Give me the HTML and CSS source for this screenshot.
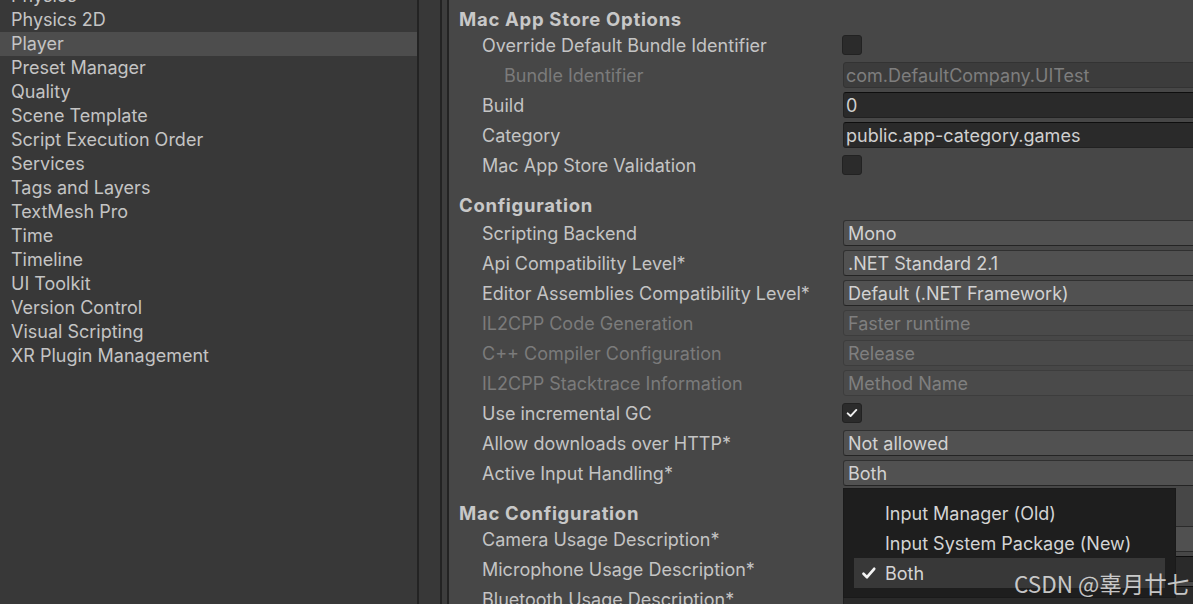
FILE: index.html
```html
<!DOCTYPE html>
<html>
<head>
<meta charset="utf-8">
<link rel="stylesheet" href="styles.css">
</head>
<body>
<div class="app">
  <nav class="sidebar">
    <div class="nav-list">
      <div class="nav-item">Physics</div>
      <div class="nav-item">Physics 2D</div>
      <div class="nav-item active">Player</div>
      <div class="nav-item">Preset Manager</div>
      <div class="nav-item">Quality</div>
      <div class="nav-item">Scene Template</div>
      <div class="nav-item">Script Execution Order</div>
      <div class="nav-item">Services</div>
      <div class="nav-item">Tags and Layers</div>
      <div class="nav-item">TextMesh Pro</div>
      <div class="nav-item">Time</div>
      <div class="nav-item">Timeline</div>
      <div class="nav-item">UI Toolkit</div>
      <div class="nav-item">Version Control</div>
      <div class="nav-item">Visual Scripting</div>
      <div class="nav-item">XR Plugin Management</div>
    </div>
  </nav>
  <div class="split"><div class="split-a"></div><div class="split-b"></div></div>
  <main class="main">
    <h2 class="heading first">Mac App Store Options</h2>
    <div class="row"><div class="label">Override Default Bundle Identifier</div><div class="field"><span class="checkbox"></span></div></div>
    <div class="row"><div class="label sub dim">Bundle Identifier</div><div class="field"><span class="text disabled">com.DefaultCompany.UITest</span></div></div>
    <div class="row"><div class="label">Build</div><div class="field"><span class="text">0</span></div></div>
    <div class="row"><div class="label">Category</div><div class="field"><span class="text">public.app-category.games</span></div></div>
    <div class="row"><div class="label">Mac App Store Validation</div><div class="field"><span class="checkbox"></span></div></div>

    <h2 class="heading second">Configuration</h2>
    <div class="row"><div class="label">Scripting Backend</div><div class="field"><span class="drop">Mono</span></div></div>
    <div class="row"><div class="label">Api Compatibility Level*</div><div class="field"><span class="drop">.NET Standard 2.1</span></div></div>
    <div class="row"><div class="label">Editor Assemblies Compatibility Level*</div><div class="field"><span class="drop">Default (.NET Framework)</span></div></div>
    <div class="row"><div class="label dim">IL2CPP Code Generation</div><div class="field"><span class="drop disabled">Faster runtime</span></div></div>
    <div class="row"><div class="label dim">C++ Compiler Configuration</div><div class="field"><span class="drop disabled">Release</span></div></div>
    <div class="row"><div class="label dim">IL2CPP Stacktrace Information</div><div class="field"><span class="drop disabled">Method Name</span></div></div>
    <div class="row"><div class="label">Use incremental GC</div><div class="field"><span class="checkbox checked"><svg viewBox="0 0 20 20" width="20" height="20"><path d="M5.2 10.4 L8.4 13.4 L14.8 6.6" fill="none" stroke="#f0f0f0" stroke-width="2.2" stroke-linecap="round" stroke-linejoin="round"/></svg></span></div></div>
    <div class="row"><div class="label">Allow downloads over HTTP*</div><div class="field"><span class="drop">Not allowed</span></div></div>
    <div class="row"><div class="label">Active Input Handling*</div><div class="field"><span class="drop">Both</span></div></div>

    <h2 class="heading">Mac Configuration</h2>
    <div class="row tight"><div class="label">Camera Usage Description*</div><div class="field"><span class="text light"></span></div></div>
    <div class="row"><div class="label">Microphone Usage Description*</div><div class="field"><span class="text"></span></div></div>
    <div class="row"><div class="label">Bluetooth Usage Description*</div><div class="field"><span class="text"></span></div></div>

    <div class="popup">
      <div class="popup-item">Input Manager (Old)</div>
      <div class="popup-item">Input System Package (New)</div>
      <div class="popup-item selected"><svg class="tick" viewBox="0 0 16 16" width="16" height="16"><path d="M2.5 8.8 L6 12.2 L13.2 3.8" fill="none" stroke="#f4f4f4" stroke-width="2.7" stroke-linecap="round" stroke-linejoin="round"/></svg>Both</div>
    </div>
  </main>
</div>
<div class="watermark">CSDN @辜月廿七</div>
</body>
</html>
```

FILE: styles.css
```css
* { box-sizing: border-box; margin: 0; padding: 0; }
html, body { width: 1193px; height: 604px; overflow: hidden; }
body {
  background: #474747;
  font-family: Inter, "Noto Sans", sans-serif;
  font-size: 18px;
  color: #c4c4c4;
}
.app { display: flex; height: 604px; }
.sidebar {
  width: 417px;
  flex: none;
  background: #383838;
  overflow: hidden;
}
.nav-list { margin-top: -16px; }
.nav-item {
  height: 24px;
  line-height: 24px;
  padding-left: 11px;
  white-space: nowrap;
}
.nav-item.active { background: #4d4d4d; }
.split {
  flex: none;
  display: flex;
  width: 32px;
  background: #232323;
  padding: 0 2px;
  gap: 2px;
}
.split-a { width: 21px; background: #383838; }
.split-b { width: 5px; background: #3d3d3d; }
.main {
  flex: 1;
  position: relative;
  overflow: hidden;
  padding-left: 10px;
  background: #474747;
}
.heading {
  font-size: 18.5px;
  font-weight: 700;
  letter-spacing: 0.7px;
  line-height: 24px;
  padding-top: 13px;
  box-sizing: content-box;
  height: 24px;
  color: #c8c8c8;
  white-space: nowrap;
}
.heading.first { padding-top: 7px; margin-bottom: -1px; }
.heading.second { padding-top: 13px; margin-bottom: 1px; }
.row {
  display: grid;
  grid-template-columns: 384px 1fr;
  height: 30px;
  align-items: center;
}
.row.tight { margin-top: -1px; }
.label {
  padding-left: 23px;
  white-space: nowrap;
}
.label.sub { padding-left: 45px; }
.label.dim { color: #7b7b7b; }
.field { display: flex; align-items: center; height: 30px; }
.checkbox {
  width: 20px;
  height: 20px;
  border-radius: 3px;
  background: #2b2b2b;
  border: 1px solid #222;
  display: flex;
  align-items: center;
  justify-content: center;
  margin-left: -1px;
}
.checkbox svg { display: block; }
.text, .drop {
  display: flex;
  align-items: center;
  height: 26px;
  width: 400px;
  margin-right: -60px;
  border-radius: 3px;
  padding-left: 4px;
  white-space: nowrap;
}
.text {
  background: #2a2a2a;
  border: 1px solid #212121;
  border-top-color: #0e0e0e;
  color: #d0d0d0;
  padding-left: 2px;
}
.text.disabled {
  background: #3c3c3c;
  border-color: #333;
  color: #7e7e7e;
}
.text.light { background: #505050; border-color: #2b2b2b; }
.drop {
  background: #515151;
  border: 1px solid #303030;
  border-bottom-color: #242424;
  color: #d2d2d2;
}
.drop.disabled {
  background: #4a4a4a;
  border-color: #3d3d3d;
  color: #7f7f7f;
}
.popup {
  position: absolute;
  left: 394px;
  top: 488px;
  width: 333px;
  height: 110px;
  background: #1e1e1e;
  border: 1px solid #1a1a1a;
  padding: 9px 10px 0 10px;
}
.popup-item {
  height: 30px;
  display: flex;
  align-items: center;
  padding-left: 31px;
  color: #d4d4d4;
  position: relative;
  white-space: nowrap;
}
.popup-item.selected { background: #383838; }
.tick { position: absolute; left: 7px; top: 7px; }
.watermark {
  position: absolute;
  left: 1014px;
  top: 568px;
  font-family: "Noto Sans CJK SC", "Noto Sans", sans-serif;
  font-size: 22.5px;
  line-height: 30px;
  color: rgba(235, 235, 235, 0.82);
  white-space: nowrap;
}
```
